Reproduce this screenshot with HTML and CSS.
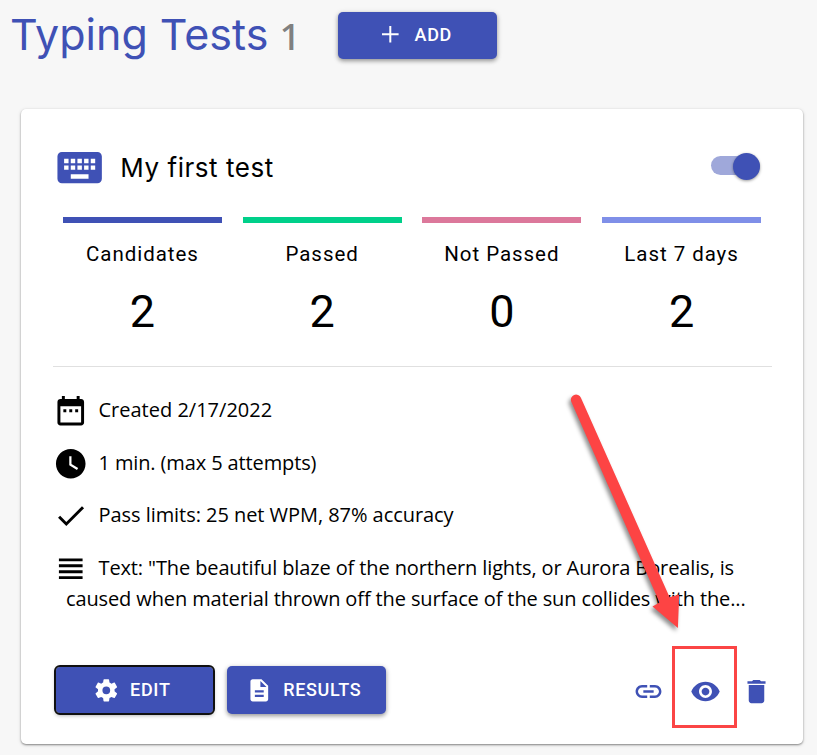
FILE: index.html
```html
<!DOCTYPE html>
<html lang="en">
<head>
<meta charset="utf-8">
<title>Typing Tests</title>
<link rel="stylesheet" href="styles.css">
</head>
<body>
<header class="page-head">
  <h1 class="title"><span class="title-text">Typing Tests</span> <span class="count">1</span></h1>
  <button class="btn"><svg class="btn-icon plus" viewBox="0 0 24 24"><path d="M19.500 12.900h-6.600v6.600h-1.800v-6.600H4.500v-1.800h6.600V4.500h1.800v6.600h6.600z"/></svg><span>ADD</span></button>
</header>
<main class="card">
  <div class="card-head">
    <svg class="keyboard" viewBox="0 0 24 24"><path d="M19,10H17V8H19M19,13H17V11H19M16,10H14V8H16M16,13H14V11H16M16,17H8V15H16M7,10H5V8H7M7,13H5V11H7M8,11H10V13H8M8,8H10V10H8M11,11H13V13H11M11,8H13V10H11M20,5H4C2.89,5 2,5.89 2,7V17A2,2 0 0,0 4,19H20A2,2 0 0,0 22,17V7C22,5.89 21.1,5 20,5Z"/></svg>
    <h2 class="name">My first test</h2>
    <span class="switch"><span class="knob"></span></span>
  </div>
  <section class="stats">
    <div class="stat indigo"><span class="label">Candidates</span><span class="value">2</span></div>
    <div class="stat green"><span class="label">Passed</span><span class="value">2</span></div>
    <div class="stat pink"><span class="label">Not Passed</span><span class="value">0</span></div>
    <div class="stat blue"><span class="label">Last 7 days</span><span class="value">2</span></div>
  </section>
  <ul class="details">
    <li class="row"><svg viewBox="0 0 24 24"><path d="M9 11H7v2h2v-2zm4 0h-2v2h2v-2zm4 0h-2v2h2v-2zm2-7h-1V2h-2v2H8V2H6v2H5c-1.11 0-1.99.9-1.99 2L3 20c0 1.1.89 2 2 2h14c1.1 0 2-.9 2-2V6c0-1.1-.9-2-2-2zm0 16H5V9h14v11z"/></svg><span>Created 2/17/2022</span></li>
    <li class="row"><svg viewBox="0 0 24 24"><path d="M12 2C6.5 2 2 6.5 2 12s4.5 10 10 10 10-4.5 10-10S17.5 2 12 2zm4.2 14.2L11 13V7h1.5v5.2l4.5 2.7-.8 1.3z"/></svg><span class="tight">1 min. (max 5 attempts)</span></li>
    <li class="row"><svg viewBox="0 0 24 24"><path d="M9 16.17L4.83 12l-1.42 1.41L9 19 21 7l-1.41-1.41z"/></svg><span class="snug">Pass limits: 25 net WPM, 87% accuracy</span></li>
    <li class="row"><svg viewBox="0 0 24 24"><path d="M4 15h16v-2H4v2zm0 4h16v-2H4v2zm0-8h16V9H4v2zm0-6v2h16V5H4z"/></svg><span class="tight">Text: "The beautiful blaze of the northern lights, or Aurora Borealis, is</span></li>
    <li class="cont"><span class="tight">caused when material thrown off the surface of the sun collides with the...</span></li>
  </ul>
  <footer class="actions">
    <button class="btn focused"><svg class="btn-icon" viewBox="0 0 24 24"><path d="M12,15.5A3.5,3.5 0 0,1 8.5,12A3.5,3.5 0 0,1 12,8.5A3.5,3.5 0 0,1 15.5,12A3.5,3.5 0 0,1 12,15.5M19.43,12.97C19.47,12.65 19.5,12.33 19.5,12C19.5,11.67 19.47,11.34 19.43,11L21.54,9.37C21.73,9.22 21.78,8.95 21.66,8.73L19.66,5.27C19.54,5.05 19.27,4.96 19.05,5.05L16.56,6.05C16.04,5.66 15.5,5.32 14.87,5.07L14.5,2.42C14.46,2.18 14.25,2 14,2H10C9.75,2 9.54,2.18 9.5,2.42L9.13,5.07C8.5,5.32 7.96,5.66 7.44,6.05L4.95,5.05C4.73,4.96 4.46,5.05 4.34,5.27L2.34,8.73C2.21,8.95 2.27,9.22 2.46,9.37L4.57,11C4.53,11.34 4.5,11.67 4.5,12C4.5,12.33 4.53,12.65 4.57,12.97L2.46,14.63C2.27,14.78 2.21,15.05 2.34,15.27L4.34,18.73C4.46,18.95 4.73,19.03 4.95,18.95L7.44,17.94C7.96,18.34 8.5,18.68 9.13,18.93L9.5,21.58C9.54,21.82 9.75,22 10,22H14C14.25,22 14.46,21.82 14.5,21.58L14.87,18.93C15.5,18.67 16.04,18.34 16.56,17.94L19.05,18.95C19.27,19.03 19.54,18.95 19.66,18.73L21.66,15.27C21.78,15.05 21.73,14.78 21.54,14.63L19.43,12.97Z"/></svg><span>EDIT</span></button>
    <button class="btn"><svg class="btn-icon" viewBox="0 0 24 24"><path d="M14 2H6c-1.1 0-2 .9-2 2v16c0 1.1.9 2 2 2h12c1.1 0 2-.9 2-2V8l-6-6zm2 16H8v-2h8v2zm0-4H8v-2h8v2zm-3-5V3.500L18.500 9H13z"/></svg><span>RESULTS</span></button>
    <div class="tools">
      <svg viewBox="0 0 24 24"><path d="M3.900 12c0-1.710 1.390-3.100 3.100-3.100h4V7H7c-2.760 0-5 2.240-5 5s2.240 5 5 5h4v-1.900H7c-1.710 0-3.100-1.390-3.100-3.100zM8 13h8v-2H8v2zm9-6h-4v1.900h4c1.710 0 3.100 1.390 3.100 3.100s-1.390 3.100-3.100 3.100h-4V17h4c2.760 0 5-2.240 5-5s-2.240-5-5-5z"/></svg>
      <span class="eye"><svg viewBox="0 0 24 24"><path d="M12 4.500C7 4.500 2.730 7.610 1 12c1.730 4.390 6 7.500 11 7.500s9.270-3.110 11-7.500c-1.730-4.390-6-7.500-11-7.500zM12 17c-2.760 0-5-2.240-5-5s2.240-5 5-5 5 2.240 5 5-2.240 5-5 5zm0-8c-1.660 0-3 1.340-3 3s1.340 3 3 3 3-1.340 3-3-1.340-3-3-3z"/></svg><span class="highlight"></span></span>
      <svg viewBox="0 0 24 24"><path d="M6 19c0 1.100.900 2 2 2h8c1.100 0 2-.900 2-2V7H6v12zM19 4h-3.500l-1-1h-5l-1 1H5v2h14V4z"/></svg>
    </div>
  </footer>
</main>
<svg class="arrow" viewBox="0 0 150 260"><path d="M31.300 21.800A5.200 5.200 0 0 1 40.900 17.700L129.600 217.200L139.200 214.600L137.900 248L112.500 226.600L119.500 222.500Z"/></svg>
</body>
</html>
```
FILE: styles.css
```css
* { box-sizing: border-box; }
body { margin: 0; width: 817px; height: 755px; overflow: hidden; position: relative; background: #f7f7f7; color: #000; font-family: Roboto, sans-serif; }
svg { display: block; fill: currentColor; flex: none; }
h1, h2, ul { margin: 0; padding: 0; font-weight: 400; }

.page-head { display: flex; height: 109px; padding: 12px 0 0 10px; align-items: flex-start; }
.title { width: 328px; height: 48px; margin-top: -2px; line-height: 48px; white-space: nowrap; font-family: Inter, sans-serif; color: #3f51b5; font-size: 43px; }
.count { margin-left: -1px; color: #808080; font-family: "Noto Sans", sans-serif; font-size: 37px; font-weight: 500; }

.btn { display: flex; align-items: center; justify-content: center; gap: 10.500px; width: 159px; height: 48px; padding: 0 5.500px 0 0; border: 0; border-radius: 5px; background: #3f51b5; color: #fff; font: 500 18px Roboto, sans-serif; letter-spacing: 0.7px; box-shadow: 0 2px 4px rgba(0,0,0,.35), 0 1px 6px rgba(0,0,0,.1); }
.page-head .btn { height: 47px; padding-bottom: 2px; }
.btn-icon { width: 26.600px; height: 26.600px; }
.actions .focused { width: 157px; height: 46px; margin-right: 2px; border-radius: 4px; outline: 2px solid #101010; }

.card { width: 782px; height: 635px; margin-left: 21px; padding: 0 31px 0 32px; background: #fff; border-radius: 5px; box-shadow: 0 1px 2px rgba(0,0,0,.4), 0 1px 4px rgba(0,0,0,.12); }
.card-head { display: flex; align-items: center; height: 108px; padding: 9px 12px 0 0; }
.keyboard { width: 53.300px; height: 53.300px; color: #3f51b5; }
.name { flex: 1; padding-left: 14px; font-family: Inter, sans-serif; font-size: 26px; line-height: 34px; letter-spacing: 0.55px; }
.switch { position: relative; width: 49px; height: 19px; border-radius: 10px; background: #9fa8da; margin-top: -4px; }
.knob { position: absolute; right: 0; top: -3px; width: 27px; height: 27px; border-radius: 50%; background: #3f51b5; box-shadow: 0 1px 3px rgba(0,0,0,.4); }

.stats { display: grid; grid-template-columns: repeat(4, 1fr); column-gap: 20.800px; height: 150px; padding: 0 11px 0 10px; border-bottom: 1px solid #e0e0e0; }
.stat { display: flex; flex-direction: column; align-items: center; border-top: 6px solid; height: 130px; }
.indigo { border-color: #3f51b5; }
.green { border-color: #00d08a; }
.pink { border-color: #dc789b; }
.blue { border-color: #7f8fe8; }
.label { margin-top: 18px; line-height: 26px; font-size: 20.500px; letter-spacing: 0.950px; white-space: nowrap; }
.value { margin-top: 18px; font-size: 45px; line-height: 54px; }

.details { list-style: none; padding-top: 26px; font-family: "Open Sans", sans-serif; font-size: 20px; white-space: nowrap; }
.row { display: flex; height: 52.600px; }
.row svg { width: 35.500px; height: 35.500px; margin-left: -0.5px; }
.row span { margin-left: 10.500px; line-height: 34px; }
.cont { padding-left: 13px; margin-top: -21.500px; line-height: 34px; }
.tight { letter-spacing: -0.120px; }
.snug { letter-spacing: -0.050px; }

.actions { display: flex; align-items: center; gap: 12px; padding-left: 3px; margin-top: 50px; }
.tools { display: flex; align-items: center; margin: 3px 0.5px 0 auto; color: #3f51b5; }
.tools svg { width: 31px; height: 31px; }
.eye { position: relative; margin: 0 20px 0 26px; }
.highlight { position: absolute; left: -18px; top: -30px; width: 65px; height: 82px; border: 3px solid #fb4545; }
.arrow { position: absolute; left: 540px; top: 380px; width: 150px; height: 260px; color: #fd4444; filter: drop-shadow(-2px 3px 2px rgba(0,0,0,.45)); }
```
